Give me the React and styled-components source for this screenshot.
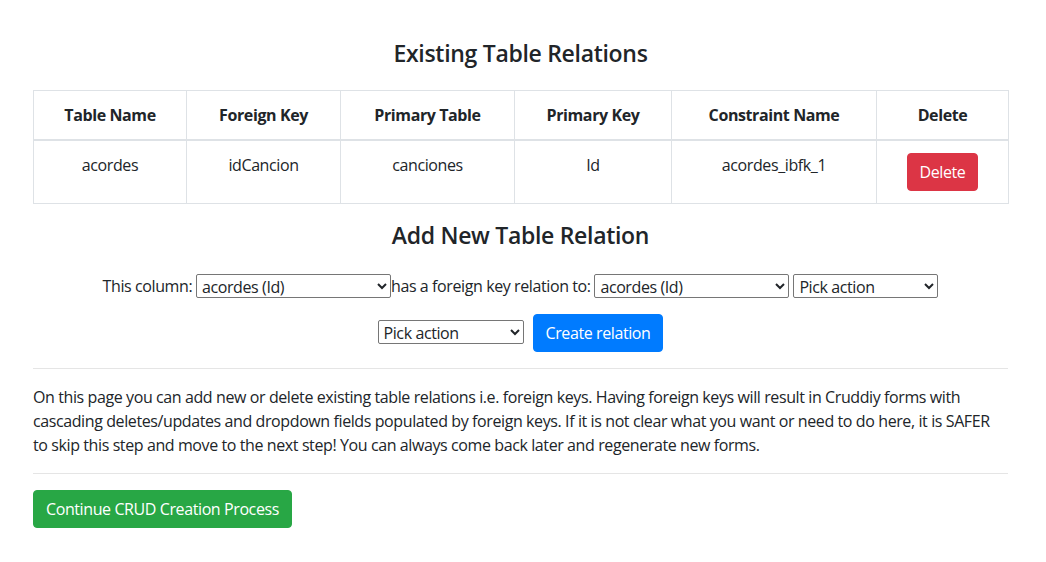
import React from 'react'
import styled, { createGlobalStyle } from 'styled-components'

const GlobalStyle = createGlobalStyle`
    * {
        box-sizing: border-box;
    }

    body {
        margin: 0;
        background: #fff;
        color: #212529;
        font-family: "Open Sans", "Noto Sans", sans-serif;
        font-size: 16px;
        line-height: 1.5;
        letter-spacing: -0.4px;
    }
`

const relations = [
    {
        table: 'acordes',
        foreignKey: 'idCancion',
        primaryTable: 'canciones',
        primaryKey: 'Id',
        constraint: 'acordes_ibfk_1',
    },
]

const columns = [
    { label: 'Table Name', width: 153 },
    { label: 'Foreign Key', width: 154 },
    { label: 'Primary Table', width: 174 },
    { label: 'Primary Key', width: 157 },
    { label: 'Constraint Name', width: 205 },
    { label: 'Delete', width: 132 },
]

const App = () => {
    return (
        <>
            <GlobalStyle />
            <Page>
                <Title>Existing Table Relations</Title>

                <Table>
                    <colgroup>
                        {columns.map(col => (
                            <col key={col.label} style={{ width: col.width }} />
                        ))}
                    </colgroup>
                    <thead>
                        <tr>
                            {columns.map(col => (
                                <Th key={col.label}>{col.label}</Th>
                            ))}
                        </tr>
                    </thead>
                    <tbody>
                        {relations.map(rel => (
                            <tr key={rel.constraint}>
                                <Td>{rel.table}</Td>
                                <Td>{rel.foreignKey}</Td>
                                <Td>{rel.primaryTable}</Td>
                                <Td>{rel.primaryKey}</Td>
                                <Td>{rel.constraint}</Td>
                                <Td>
                                    <Button variant="danger">Delete</Button>
                                </Td>
                            </tr>
                        ))}
                    </tbody>
                </Table>

                <Title>Add New Table Relation</Title>

                <Form>
                    <FormRow>
                        <span>This column:&nbsp;</span>
                        <Select width={195} defaultValue="acordes (Id)">
                            <option>acordes (Id)</option>
                            <option>acordes (idCancion)</option>
                            <option>canciones (Id)</option>
                        </Select>
                        <span>has a foreign key relation to:&nbsp;</span>
                        <Select width={195} defaultValue="acordes (Id)">
                            <option>acordes (Id)</option>
                            <option>canciones (Id)</option>
                        </Select>
                        <Select width={145} gap={4}>
                            <option>Pick action</option>
                            <option>On Delete Cascade</option>
                            <option>On Delete Set Null</option>
                        </Select>
                    </FormRow>
                    <FormRow baseline>
                        <Select width={146}>
                            <option>Pick action</option>
                            <option>On Update Cascade</option>
                            <option>On Update Set Null</option>
                        </Select>
                        <Button variant="primary" gap={9}>Create relation</Button>
                    </FormRow>
                </Form>

                <Rule />

                <Text>
                    On this page you can add new or delete existing table relations i.e. foreign keys. Having foreign keys will result in Cruddiy forms with<br />
                    cascading deletes/updates and dropdown fields populated by foreign keys. If it is not clear what you want or need to do here, it is SAFER<br />
                    to skip this step and move to the next step! You can always come back later and regenerate new forms.
                </Text>

                <Rule />

                <Button variant="success">Continue CRUD Creation Process</Button>
            </Page>
        </>
    )
}

const colors = {
    danger: '#dc3545',
    primary: '#007bff',
    success: '#28a745',
}

const Page = styled.div`
    width: 975px;
    margin-left: 33px;
    padding: 36px 0 40px;
`

const Title = styled.h3`
    margin: 0 0 20px;
    font-size: 23px;
    font-weight: 600;
    line-height: 34px;
    letter-spacing: -0.3px;
    text-align: center;
`

const Table = styled.table`
    width: 975px;
    table-layout: fixed;
    border-collapse: collapse;
    margin-bottom: 14px;
`

const Th = styled.th`
    padding: 12px;
    border: 1px solid #dee2e6;
    border-bottom-width: 2px;
    font-weight: 700;
    text-align: center;
    vertical-align: bottom;
`

const Td = styled.td`
    padding: 12px;
    border: 1px solid #dee2e6;
    text-align: center;
    vertical-align: top;
`

const Button = styled.button`
    display: inline-block;
    height: 38px;
    margin-left: ${({ gap }) => gap || 0}px;
    padding: 6px 12px;
    border: 1px solid ${({ variant }) => colors[variant]};
    border-radius: 4px;
    background: ${({ variant }) => colors[variant]};
    color: #fff;
    font-family: inherit;
    font-size: 16px;
    line-height: 24px;
    letter-spacing: inherit;
    cursor: pointer;
`

const Form = styled.div`
    display: flex;
    flex-direction: column;
    gap: 16px;
    margin-top: 22px;
`

const FormRow = styled.div`
    display: flex;
    justify-content: center;
    align-items: ${({ baseline }) => (baseline ? 'baseline' : 'center')};
    white-space: nowrap;
`

const Select = styled.select`
    width: ${({ width }) => width}px;
    height: 24px;
    margin-left: ${({ gap }) => gap || 0}px;
    padding: 0 0 0 1px;
    border: 1px solid #767676;
    border-radius: 2px;
    background: #fff;
    color: #212529;
    font-family: inherit;
    font-size: 16px;
    letter-spacing: inherit;
`

const Rule = styled.hr`
    margin: 16px 0;
    border: 0;
    border-top: 1px solid rgba(0, 0, 0, 0.1);
`

const Text = styled.p`
    margin: 0 0 16px;
    white-space: nowrap;
`

export default App
